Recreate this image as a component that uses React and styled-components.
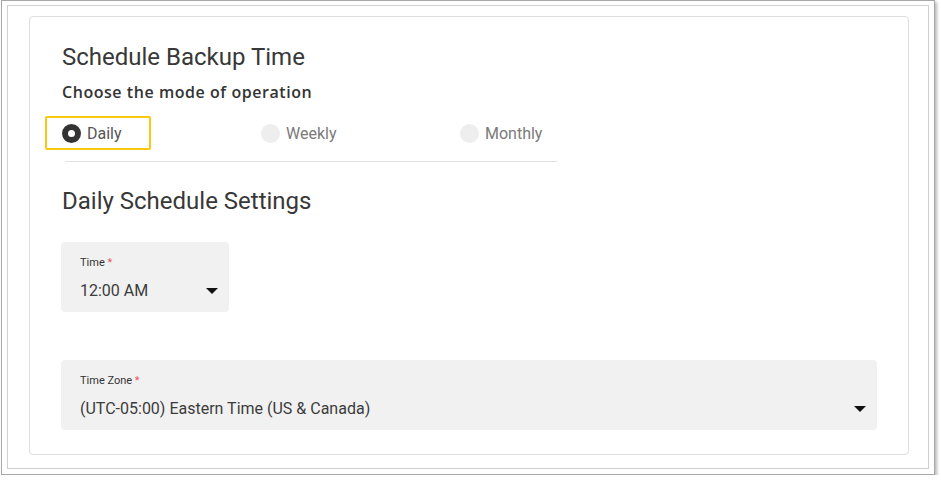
import React from "react";
import styled, { createGlobalStyle } from "styled-components";

const GlobalStyle = createGlobalStyle`
  html, body {
    margin: 0;
    padding: 0;
    background: #ffffff;
  }
  body {
    font-family: Roboto, "Liberation Sans", Arial, sans-serif;
    color: #333;
  }
`;

const Frame = styled.div`
  box-sizing: border-box;
  width: 934px;
  height: 475px;
  margin-left: 1px;
  padding: 4px 5px 5px 5px;
  border: 1px solid #a8a8a8;
  background: #fff;
  box-shadow: 2px 2px 3px rgba(0, 0, 0, 0.28);
`;

const InnerFrame = styled.div`
  box-sizing: border-box;
  height: 100%;
  display: flex;
  padding: 10px 19px 13px 21px;
  border: 1px solid #cfcfcf;
`;

const Card = styled.section`
  box-sizing: border-box;
  flex: 1;
  display: flex;
  flex-direction: column;
  padding: 25px 30px 0 32px;
  border: 1px solid #dedede;
  border-radius: 4px;
`;

const Heading = styled.h2`
  margin: ${props => props.spaced ? "24px 0 0" : "0"};
  font-size: 24px;
  line-height: 30px;
  font-weight: 400;
  color: #383838;
`;

const SubHeading = styled.h3`
  margin: 10px 0 0;
  font-family: "Open Sans", sans-serif;
  font-size: 16px;
  line-height: 20px;
  font-weight: 600;
  letter-spacing: 0.55px;
  color: #333;
`;

const RadioRow = styled.div`
  display: grid;
  grid-template-columns: repeat(3, 199px);
  margin-top: 14px;
  height: 34px;
  align-items: center;
`;

const Option = styled.label`
  position: relative;
  display: flex;
  align-items: center;
  gap: 6px;
  font-size: 16px;
  color: ${props => props.checked ? "#555" : "#7a7a7a"};
`;

const Dot = styled.span`
  box-sizing: border-box;
  width: 19px;
  height: 19px;
  border-radius: 50%;
  background: ${props => props.checked ? "#fff" : "#eeeeee"};
  border: ${props => props.checked ? "6px solid #333" : "none"};
`;

const Highlight = styled.span`
  position: absolute;
  box-sizing: border-box;
  left: -17px;
  top: 50%;
  transform: translateY(-50%);
  width: 106px;
  height: 34px;
  border: 2px solid #fcc70f;
  border-radius: 2px;
`;

const Divider = styled.hr`
  margin: 11px 0 0 3px;
  width: 492px;
  height: 0;
  border: none;
  border-top: 1px solid #e2e2e2;
`;

const Field = styled.div`
  box-sizing: border-box;
  width: ${props => props.wide ? "816px" : "168px"};
  height: 70px;
  margin-top: ${props => props.wide ? "48px" : "26px"};
  margin-left: -1px;
  padding: 14px 11px 0 19px;
  background: #f1f1f1;
  border-radius: 4px;
`;

const FieldLabel = styled.div`
  font-size: 11px;
  line-height: 14px;
  color: #333;

  span {
    color: #e85c5c;
  }
`;

const FieldValue = styled.div`
  display: flex;
  align-items: center;
  justify-content: space-between;
  margin-top: 10px;
  font-size: 16px;
  line-height: 22px;
  color: #3c3c3c;
`;

const Caret = styled.span`
  width: 0;
  height: 0;
  border-left: 6px solid transparent;
  border-right: 6px solid transparent;
  border-top: 6px solid #111;
`;

const modes = ["Daily", "Weekly", "Monthly"];

export default function App() {
  return (
    <>
      <GlobalStyle />
      <Frame>
        <InnerFrame>
          <Card>
            <Heading>Schedule Backup Time</Heading>
            <SubHeading>Choose the mode of operation</SubHeading>
            <RadioRow>
              {modes.map((mode, i) => (
                <Option key={mode} checked={i === 0}>
                  {i === 0 && <Highlight />}
                  <Dot checked={i === 0} />
                  {mode}
                </Option>
              ))}
            </RadioRow>
            <Divider />
            <Heading spaced>Daily Schedule Settings</Heading>
            <Field>
              <FieldLabel>Time <span>*</span></FieldLabel>
              <FieldValue>12:00 AM<Caret /></FieldValue>
            </Field>
            <Field wide>
              <FieldLabel>Time Zone <span>*</span></FieldLabel>
              <FieldValue>(UTC-05:00) Eastern Time (US &amp; Canada)<Caret /></FieldValue>
            </Field>
          </Card>
        </InnerFrame>
      </Frame>
    </>
  );
}
